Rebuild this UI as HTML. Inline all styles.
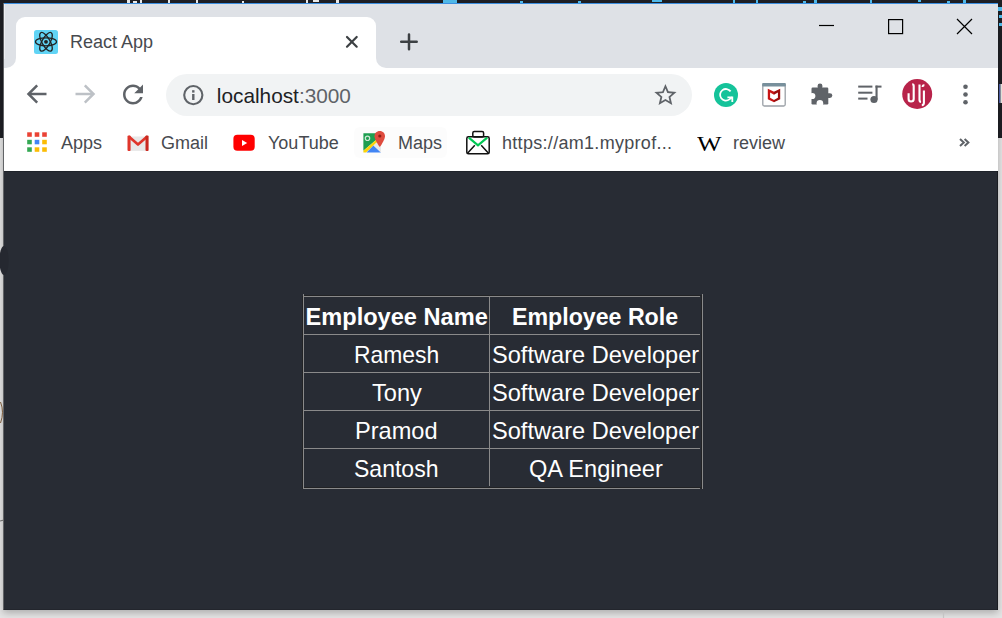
<!DOCTYPE html>
<html><head><meta charset="utf-8">
<style>
*{margin:0;padding:0;box-sizing:border-box}
html,body{width:1002px;height:618px;overflow:hidden;background:#e4e4e4;font-family:"Liberation Sans",sans-serif}
.a{position:absolute}
#ov{position:absolute;left:0;top:0;width:1002px;height:618px}
#bgtop{left:0;top:0;width:1002px;height:138px;background:#1e1f24}
#shadow{left:3px;top:3px;width:995px;height:607px;box-shadow:0 3px 7px rgba(0,0,0,.24)}
#strip{left:3px;top:3px;width:995px;height:65px;background:#dee1e6;border-top:1px solid #3d8fe0}
#tab{left:16px;top:17px;width:360px;height:52px;background:#fff;border-radius:9px 9px 0 0}
.foot{top:58px;width:10px;height:10px;background:#fff}
.foot i{position:absolute;left:0;top:0;width:10px;height:10px;background:#dee1e6}
#toolbar{left:3px;top:68px;width:995px;height:54px;background:#fff}
#bm{left:3px;top:122px;width:995px;height:49px;background:#fff}
#content{left:3px;top:171px;width:995px;height:439px;background:#282c34;border-top:1px solid #1f232a}
#edgeL{left:3px;top:3px;width:1px;height:607px;background:#626467}
.ttl{left:70px;top:31px;font-size:18px;color:#474a4f;white-space:nowrap;line-height:22px}
#omni{left:166px;top:74px;width:526px;height:42px;border-radius:21px;background:#f1f3f4}
.url{left:216.8px;top:84px;font-size:20.8px;color:#202124;white-space:nowrap;line-height:24px}
.url span{color:#5f6368}
.bmt{top:132px;font-size:18px;color:#474a4f;white-space:nowrap;line-height:22px}
.tx{color:#fff;font-size:23.6px;white-space:nowrap;line-height:28px}
</style></head><body>
<div class="a" id="bgtop"></div>
<div class="a" id="shadow"></div>
<div class="a" id="strip"></div>
<div class="a" id="toolbar"></div>
<div class="a" id="bm"></div>
<div class="a" id="content"></div>
<div class="a" id="tab"></div>
<div class="a foot" style="left:6px"><i style="border-bottom-right-radius:10px"></i></div>
<div class="a foot" style="left:376px"><i style="border-bottom-left-radius:10px"></i></div>
<div class="a" id="omni"></div>
<div class="a" id="edgeL"></div>
<div class="a" style="left:4px;top:4px;width:1px;height:55px;background:rgba(255,255,255,.45)"></div>
<div class="a" style="left:997px;top:171px;width:1px;height:439px;background:rgba(0,0,0,.35)"></div>
<div class="a" style="left:3px;top:609px;width:995px;height:1px;background:rgba(0,0,0,.12)"></div>

<div class="a" style="left:354px;top:127px;width:93px;height:31px;border-radius:6px;background:#fcfcfc"></div>
<div class="a ttl">React App</div>
<div class="a url">localhost<span>:3000</span></div>

<div class="a bmt" style="left:61px">Apps</div>
<div class="a bmt" style="left:161px">Gmail</div>
<div class="a bmt" style="left:268px">YouTube</div>
<div class="a bmt" style="left:398px">Maps</div>
<div class="a bmt" style="left:502px;letter-spacing:0.3px">https://am1.myprof...</div>
<div class="a bmt" style="left:733px">review</div>
<div class="a" style="left:697px;top:132px;font-family:'Liberation Serif',serif;font-size:22px;line-height:24px;color:#000;transform:scaleX(1.18);transform-origin:0 0">W</div>

<div class="a tx" style="left:305.5px;top:303px;font-weight:bold">Employee Name</div>
<div class="a tx" style="left:512px;top:303px;font-weight:bold;transform:scaleX(.982);transform-origin:0 0">Employee Role</div>
<div class="a tx" style="left:354px;top:341px;transform:scaleX(.97);transform-origin:0 0">Ramesh</div>
<div class="a tx" style="left:492px;top:341px">Software Developer</div>
<div class="a tx" style="left:372px;top:379px">Tony</div>
<div class="a tx" style="left:492px;top:379px">Software Developer</div>
<div class="a tx" style="left:355px;top:417px">Pramod</div>
<div class="a tx" style="left:492px;top:417px">Software Developer</div>
<div class="a tx" style="left:354px;top:455px;transform:scaleX(.976);transform-origin:0 0">Santosh</div>
<div class="a tx" style="left:529px;top:455px">QA Engineer</div>

<svg id="ov" width="1002" height="618" viewBox="0 0 1002 618">
 <!-- table lines -->
 <g fill="#8a8a8a">
  <rect x="303" y="294" width="1" height="195"/>
  <rect x="702" y="294" width="1" height="195"/>
  <rect x="303" y="296" width="397" height="1"/>
  <rect x="303" y="334" width="397" height="1"/>
  <rect x="303" y="372" width="397" height="1"/>
  <rect x="303" y="410" width="397" height="1"/>
  <rect x="303" y="448" width="397" height="1"/>
  <rect x="303" y="488" width="397" height="1"/>
  <rect x="489" y="296" width="1" height="190"/>
 </g>
 <g fill="#222325">
  <rect x="304" y="295" width="398" height="1"/>
  <rect x="701" y="296" width="1" height="193"/>
  <rect x="304" y="487" width="397" height="1"/>
  <rect x="302" y="296" width="1" height="193"/>
 </g>

 <!-- favicon -->
 <rect x="34" y="30" width="24" height="24" rx="2.5" fill="#61d4f5"/>
 <g fill="none" stroke="#222" stroke-width="1.3" transform="translate(46 41.8)">
  <ellipse rx="10.5" ry="4"/>
  <ellipse rx="10.5" ry="4" transform="rotate(60)"/>
  <ellipse rx="10.5" ry="4" transform="rotate(120)"/>
  <circle r="1.9" fill="#222" stroke="none"/>
 </g>

 <!-- tab close / new tab -->
 <path d="M347 37 L356.7 46.7 M356.7 37 L347 46.7" stroke="#3c4043" stroke-width="2.2" stroke-linecap="round"/>
 <path d="M409 34.4 V49.2 M401.2 41.7 H416.7" stroke="#3c4043" stroke-width="2.5" stroke-linecap="round"/>

 <!-- window controls -->
 <path d="M819 25.5 H834" stroke="#000" stroke-width="1.2"/>
 <rect x="888.6" y="19.6" width="14" height="14" fill="none" stroke="#000" stroke-width="1.2"/>
 <path d="M957 19 L972 34 M972 19 L957 34" stroke="#000" stroke-width="1.2"/>

 <!-- nav -->
 <g stroke="#5f6368" stroke-width="2.5" fill="none">
  <path d="M46.5 94 H29"/>
  <path d="M37.2 85.3 L28.5 94 L37.2 102.7"/>
 </g>
 <g stroke="#bdc1c6" stroke-width="2.5" fill="none">
  <path d="M75.5 94 H93"/>
  <path d="M84.8 85.3 L93.5 94 L84.8 102.7"/>
 </g>
 <g transform="translate(118 79.5) scale(1.25)">
  <path fill="#5f6368" d="M17.65 6.35C16.2 4.9 14.21 4 12 4c-4.42 0-7.99 3.58-7.99 8s3.57 8 7.99 8c3.73 0 6.84-2.55 7.73-6h-2.08c-.82 2.33-3.04 4-5.65 4-3.31 0-6-2.69-6-6s2.69-6 6-6c1.66 0 3.14.69 4.22 1.78L13 11h7V4l-2.35 2.35z"/>
 </g>
 <!-- info -->
 <circle cx="193.3" cy="95.1" r="9.1" fill="none" stroke="#5f6368" stroke-width="2.1"/>
 <rect x="192.1" y="90.2" width="2.4" height="2.4" fill="#5f6368"/>
 <rect x="192.1" y="94" width="2.4" height="6" fill="#5f6368"/>
 <!-- star -->
 <g transform="translate(652.1 81.8) scale(1.11 1.11)">
  <path fill="#5f6368" d="M22 9.24l-7.19-.62L12 2 9.19 8.63 2 9.24l5.46 4.73L5.82 21 12 17.27 18.18 21l-1.63-7.03L22 9.24zM12 15.4l-3.76 2.27 1-4.28-3.32-2.88 4.38-.38L12 6.1l1.71 4.04 4.38.38-3.32 2.88 1 4.28L12 15.4z"/>
 </g>

 <!-- grammarly -->
 <circle cx="726" cy="95" r="12" fill="#15c39a"/>
 <path d="M730.6 91.4 A5.8 5.8 0 1 0 729.4 99.4 L732 97.3" fill="none" stroke="#fff" stroke-width="1.8"/>
 <path d="M727.4 97.3 H732.3 V102" fill="none" stroke="#fff" stroke-width="1.8"/>
 <!-- mcafee -->
 <rect x="762.8" y="83.6" width="22.4" height="22.4" rx="1.5" fill="#fff" stroke="#9aa0a6" stroke-width="1.3"/>
 <rect x="762.2" y="83" width="23.6" height="3.6" rx="1" fill="#78909c"/>
 <path d="M767.8 88.8 L774.1 91.8 L774.1 102.2 L767.8 99.2 Z M770.1 92.4 V97.8 L774.1 99.9 V94.8 Z" fill="#c81414" fill-rule="evenodd"/>
 <path d="M780.2 88.8 L773.9 91.8 L773.9 102.2 L780.2 99.2 Z M777.9 92.4 V97.8 L773.9 99.9 V94.8 Z" fill="#9c0c0c" fill-rule="evenodd"/>
 <!-- puzzle -->
 <g fill="#5f6368">
  <rect x="811.5" y="87.5" width="16.8" height="17" rx="1.2"/>
  <rect x="817.6" y="83.4" width="4.8" height="6" rx="2.4"/>
  <rect x="826" y="93.2" width="6.3" height="4.8" rx="2.4"/>
 </g>
 <g fill="#fff">
  <circle cx="812.3" cy="96" r="3.1"/>
  <circle cx="819.9" cy="103.2" r="3.3"/>
 </g>
 <!-- media -->
 <g fill="#5f6368">
  <rect x="858.2" y="85.6" width="14.2" height="2"/>
  <rect x="858.2" y="91.7" width="14.2" height="2"/>
  <rect x="858.2" y="97.6" width="9.3" height="2"/>
  <rect x="875.5" y="85.6" width="2.1" height="14"/>
  <rect x="875.5" y="85.6" width="6" height="2"/>
  <circle cx="874" cy="99.5" r="3.6"/>
 </g>
 <!-- avatar -->
 <circle cx="917.2" cy="94" r="15" fill="#b8234a"/>
 <g fill="none" stroke="#fff">
  <path d="M912.2 84.2 Q913.7 84.2 913.7 86 V99 Q913.7 101.5 911 101.5 Q908.6 101.5 908.6 99 V93.2" stroke-width="2.1"/>
  <path d="M919.5 84.6 V99.8 Q919.5 101.8 921 102" stroke-width="2.1"/>
  <path d="M923.9 90.4 V103 Q923.9 105 921.8 105.2" stroke-width="2.1"/>
  <path d="M922.6 87 Q922.6 85 924.4 85.4" stroke-width="2"/>
 </g>
 <!-- menu -->
 <g fill="#5f6368">
  <circle cx="965.5" cy="86.8" r="2.3"/>
  <circle cx="965.5" cy="94.5" r="2.3"/>
  <circle cx="965.5" cy="102.2" r="2.3"/>
 </g>

 <!-- apps grid -->
 <g>
  <rect x="27.2" y="132.3" width="4.6" height="4.5" fill="#ea4335"/>
  <rect x="34.7" y="132.3" width="4.6" height="4.5" fill="#ea4335"/>
  <rect x="42.2" y="132.3" width="4.6" height="4.5" fill="#ea4335"/>
  <rect x="27.2" y="139.8" width="4.6" height="4.5" fill="#34a853"/>
  <rect x="34.7" y="139.8" width="4.6" height="4.5" fill="#4285f4"/>
  <rect x="42.2" y="139.8" width="4.6" height="4.5" fill="#fbbc05"/>
  <rect x="27.2" y="147.3" width="4.6" height="4.5" fill="#34a853"/>
  <rect x="34.7" y="147.3" width="4.6" height="4.5" fill="#fbbc05"/>
  <rect x="42.2" y="147.3" width="4.6" height="4.5" fill="#fbbc05"/>
 </g>
 <!-- gmail -->
 <rect x="129" y="136.5" width="18.5" height="14.4" fill="#e8e8e8"/>
 <path d="M128.8 136.6 L138 144.6 L147.2 136.6" fill="none" stroke="#e0352b" stroke-width="2.6" stroke-linejoin="round"/>
 <rect x="127.5" y="135.4" width="3.1" height="15.5" rx="1" fill="#e0352b"/>
 <rect x="145.5" y="135.4" width="3.1" height="15.5" rx="1" fill="#c9281f"/>
 <!-- youtube -->
 <rect x="233.4" y="134.8" width="21.3" height="16" rx="4" fill="#ff0000"/>
 <path d="M242 140 L247.2 143 L242 146.1 Z" fill="#fff"/>
 <!-- maps -->
 <path d="M363.4 133.3 H376 V140 L363.4 150.7 Z" fill="#1e9e50"/>
 <path d="M363.4 150.7 L376 140 L378 141.5 L366 152.5 L363.4 152.5 Z" fill="#fbd30a"/>
 <path d="M366.5 152.5 L373.5 145.5 L381 152.5 Z" fill="#4285f4"/>
 <path d="M373.5 145.5 L376.5 142.6 L381 147 L381 152.5 Z" fill="#e8e8e8"/>
 <circle cx="367.5" cy="138.3" r="2.2" fill="none" stroke="#cfe8d6" stroke-width="1.2"/>
 <path d="M379.8 131 C376.6 131 374.5 133.3 374.5 136.2 C374.5 140 379.8 147 379.8 147 C379.8 147 385 140 385 136.2 C385 133.3 383 131 379.8 131 Z" fill="#de4b3e"/>
 <circle cx="379.8" cy="136" r="1.6" fill="#8f1d14"/>
 <!-- mail -->
 <g fill="none" stroke="#111" stroke-width="1.5">
  <rect x="472.8" y="131.6" width="10.8" height="5.5" rx="1.5"/>
  <rect x="466.8" y="136.8" width="22.4" height="17" rx="1.6"/>
  <path d="M467.5 153.2 L474.8 145.2 M488.5 153.2 L481.2 145.2"/>
 </g>
 <path d="M468.8 137.6 L478 145.4 L487.2 137.6" fill="none" stroke="#00c853" stroke-width="2.2"/>
 <!-- chevron -->
 <path d="M960 139 L963.8 142.5 L960 146 M964.6 139 L968.4 142.5 L964.6 146" fill="none" stroke="#5f6368" stroke-width="2"/>


 <!-- misc background glyph bits -->
 <g fill="#e8e8e8">
  <rect x="127" y="0" width="3" height="3"/><rect x="133" y="1" width="4" height="2"/><rect x="140" y="0" width="2" height="3"/>
  <rect x="168" y="0" width="2" height="3"/><rect x="196" y="0" width="2" height="3"/><rect x="242" y="1" width="2" height="2"/>
  <rect x="306" y="0" width="2" height="3"/><rect x="313" y="0" width="6" height="2"/><rect x="336" y="0" width="3" height="3"/>
 </g>
 <g fill="#4fb8e8">
  <rect x="443" y="0" width="14" height="3"/><rect x="520" y="1" width="3" height="2"/><rect x="578" y="1" width="3" height="2"/>
  <rect x="652" y="0" width="10" height="2"/><rect x="733" y="0" width="2" height="3"/><rect x="756" y="0" width="2" height="3"/>
  <rect x="803" y="1" width="3" height="2"/><rect x="814" y="0" width="3" height="3"/><rect x="870" y="0" width="2" height="3"/>
  <rect x="918" y="0" width="3" height="2"/><rect x="947" y="1" width="3" height="2"/><rect x="963" y="0" width="3" height="3"/>
  <rect x="998" y="7" width="4" height="4"/><rect x="999" y="15" width="3" height="3"/><rect x="999" y="23" width="3" height="3"/>
 </g>
 <rect x="999" y="84" width="1.5" height="19" fill="#4a5aa0"/>
 <rect x="1000.5" y="84" width="1.5" height="19" fill="#e0e0d8"/>
 <path d="M0.5 402 Q4.5 412 0.5 423" fill="none" stroke="#7a5a3a" stroke-width="1"/>
 <path d="M0 521 L4 520" stroke="#6a6a6a" stroke-width="1.2"/>
 <!-- background bits -->
 <ellipse cx="4" cy="260.5" rx="4.6" ry="14.5" fill="#252830"/>
 <path d="M943.5 611 V618" stroke="#c4c4c4" stroke-width="1.2"/>
</svg>
</body></html>
